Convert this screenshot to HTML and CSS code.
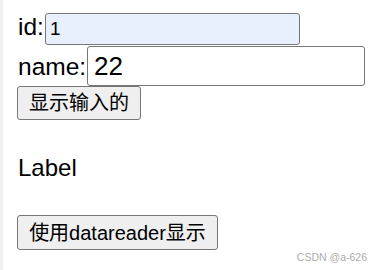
FILE: index.html
```html
<!DOCTYPE html>
<html>
<head>
<meta charset="utf-8">
<link rel="stylesheet" href="styles.css">
</head>
<body>
<div class="page">
  <div class="row row-id">
    <span class="lbl">id:</span><input class="inp inp-id" type="text" value="1">
  </div>
  <div class="row row-name">
    <span class="lbl">name:</span><input class="inp inp-name" type="text" value="22">
  </div>
  <button class="btn btn-show">显示输入的</button>
  <div class="label-out">Label</div>
  <button class="btn btn-reader">使用datareader显示</button>
  <div class="watermark">CSDN @a-626</div>
</div>
</body>
</html>
```
FILE: styles.css
```css
html, body {
  margin: 0;
  padding: 0;
  background: #ffffff;
}
.page {
  position: relative;
  width: 383px;
  height: 270px;
  box-sizing: border-box;
  border-left: 3px solid #f0f0f0;
  padding: 13px 0 0 14px;
  font-family: "Liberation Sans", "Noto Sans CJK SC", sans-serif;
  color: #000;
  display: flex;
  flex-direction: column;
  align-items: flex-start;
}
.row {
  display: flex;
  align-items: baseline;
}
.row-id {
  height: 33px;
}
.row-name {
  height: 40px;
}
.lbl {
  font-size: 24.5px;
  line-height: 28px;
  padding-left: 1px;
  padding-right: 1px;
}
.inp {
  box-sizing: border-box;
  border: 1.5px solid #767676;
  border-radius: 3px;
  padding: 0 4px;
  margin: 0;
  font-family: "Liberation Sans", "Noto Sans CJK SC", sans-serif;
  color: #000;
  outline: none;
}
.inp-id {
  width: 255px;
  height: 32px;
  font-size: 19px;
  background: #e8f0fe;
}
.inp-name {
  width: 278px;
  height: 40px;
  font-size: 26px;
  padding-left: 6px;
  background: #fff;
}
.btn {
  box-sizing: border-box;
  margin: 0;
  border: 1px solid #767676;
  border-radius: 3px;
  background: #efefef;
  color: #000;
  font-family: "Liberation Sans", "Noto Sans CJK SC", sans-serif;
  font-size: 20px;
  line-height: 24px;
  padding: 0;
  text-align: center;
}
.btn-show {
  width: 124px;
  height: 34px;
}
.label-out {
  font-size: 24px;
  line-height: 28px;
  margin-top: 34px;
  padding-left: 1px;
}
.btn-reader {
  width: 201px;
  height: 35px;
  margin-top: 33px;
}
.watermark {
  position: absolute;
  right: 16px;
  bottom: 7px;
  font-family: "Liberation Sans", sans-serif;
  font-size: 10.5px;
  color: #adadad;
}
```
